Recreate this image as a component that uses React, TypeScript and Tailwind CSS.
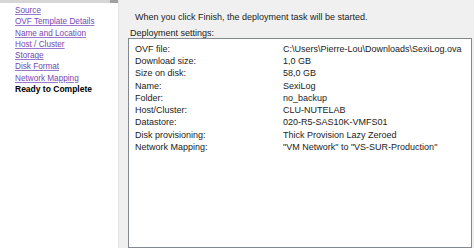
const steps = [
  "Source",
  "OVF Template Details",
  "Name and Location",
  "Host / Cluster",
  "Storage",
  "Disk Format",
  "Network Mapping",
];

const settings: [string, string][] = [
  ["OVF file:", "C:\\Users\\Pierre-Lou\\Downloads\\SexiLog.ova"],
  ["Download size:", "1,0 GB"],
  ["Size on disk:", "58,0 GB"],
  ["Name:", "SexiLog"],
  ["Folder:", "no_backup"],
  ["Host/Cluster:", "CLU-NUTELAB"],
  ["Datastore:", "020-R5-SAS10K-VMFS01"],
  ["Disk provisioning:", "Thick Provision Lazy Zeroed"],
  ["Network Mapping:", "\"VM Network\" to \"VS-SUR-Production\""],
];

export default function App() {
  return (
    <div className="flex h-[248px] w-[474px] overflow-hidden bg-white font-['Liberation_Sans',Arial,sans-serif] text-[9px] text-[#222]">
      <div className="relative w-[118px] shrink-0 border-t-[3px] border-[#d6d6d6] bg-white">
        <div className="absolute -top-[3px] right-0 h-[3px] w-[8px] bg-[#a0a0a0]" />
        <ul className="flex flex-col pl-[15px] pt-[2px]">
          {steps.map((s) => (
            <li key={s} className="h-[11.3px] text-[8.2px] leading-[11.3px]">
              <span className="text-[#7448b4] underline decoration-[#9a78cc]">{s}</span>
            </li>
          ))}
          <li className="h-[11.3px] text-[8.5px] font-bold leading-[11.3px] text-black">Ready to Complete</li>
        </ul>
      </div>
      <div className="flex flex-1 flex-col border-l border-[#e4e4e4] bg-[#f0f0f0] pl-[9px] pr-[2px]">
        <p className="pl-[7px] pt-[11px] leading-[12px]">
          When you click Finish, the deployment task will be started.
        </p>
        <p className="pl-[2px] pt-[5px] leading-[10px]">Deployment settings:</p>
        <div className="flex-1 border border-[#828790] bg-white pl-[6px] pt-[4px]">
          {settings.map(([k, v]) => (
            <div key={k} className="flex h-[12.3px] items-center">
              <span className="w-[148px] shrink-0 leading-none">{k}</span>
              <span className="leading-none">{v}</span>
            </div>
          ))}
        </div>
      </div>
    </div>
  );
}
